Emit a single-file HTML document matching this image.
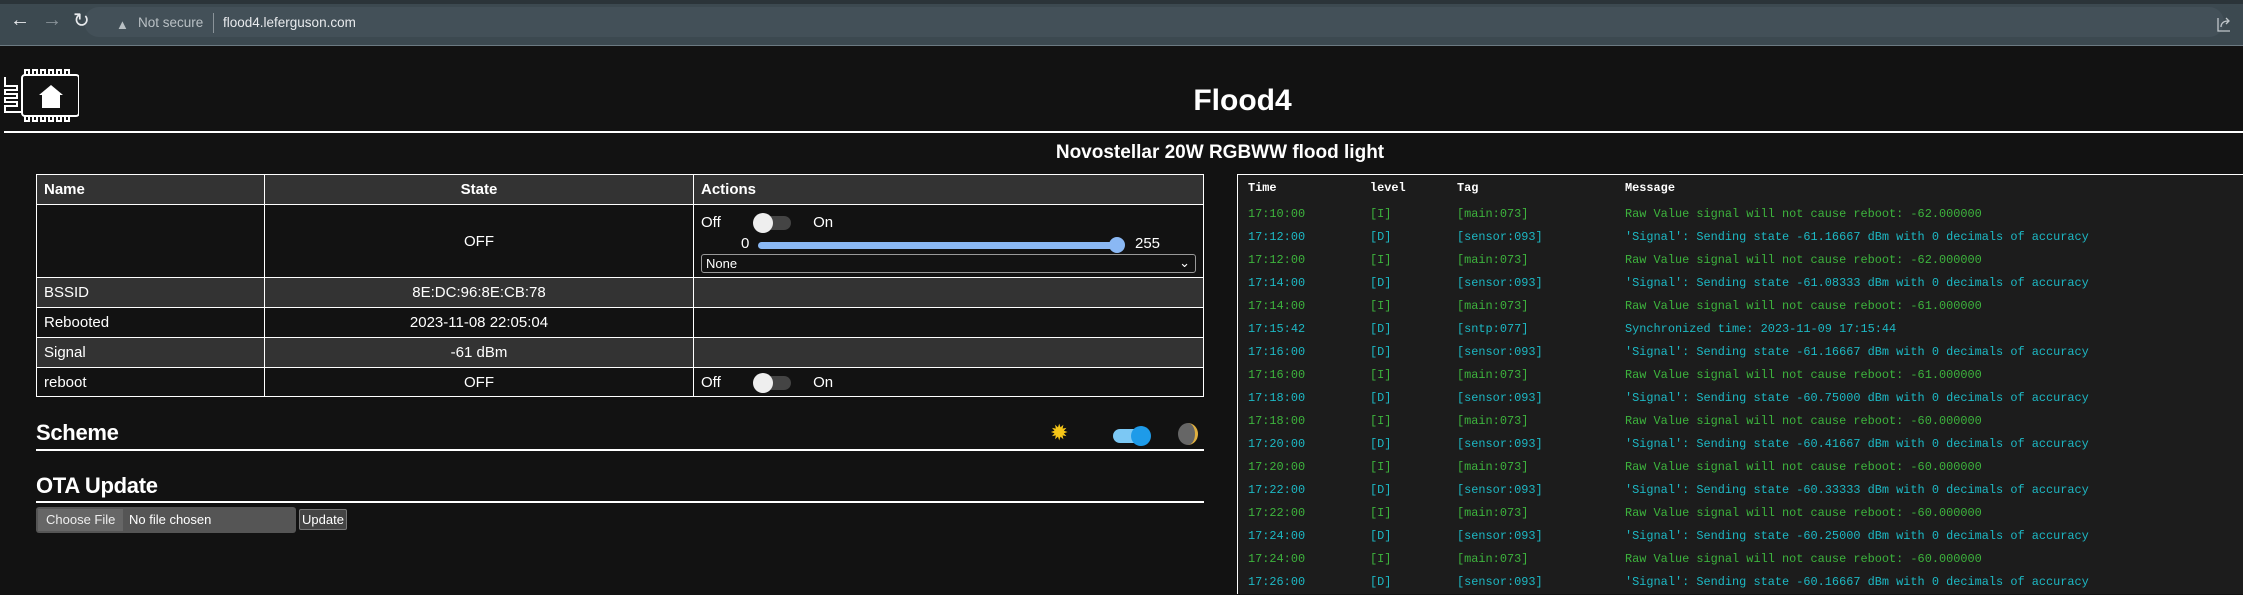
<!DOCTYPE html>
<html><head><meta charset="utf-8"><style>
*{box-sizing:border-box;margin:0;padding:0}
body{width:2243px;height:587px;overflow:hidden;background:#121212;font-family:"Liberation Sans",sans-serif;color:#fff;position:relative}
.abs{position:absolute}
.tb{left:0;top:0;width:2243px;height:46px;background:#3c4950;border-top:4px solid #2b3439;border-bottom:1px solid #6c7a82}
.url{left:84px;top:7px;width:2140px;height:30px;border-radius:15px;background:#435058}
table{border-collapse:collapse;position:absolute;left:36px;top:174px;width:1168px;font-size:15px}
td,th{border:1px solid #fff;padding:0 7px}
th{background:#333;text-align:left;height:30px}
th.c,td.c{text-align:center}
.g{background:#333}
.sw{display:inline-block;width:36px;height:14px;border-radius:7px;background:#444;position:relative;vertical-align:middle}
.sw:before{content:"";position:absolute;left:-2px;top:-3px;width:20px;height:20px;border-radius:50%;background:#eee}
.log{left:1237px;top:174px;width:1010px;height:420px;background:#1c1c1c;border-top:1px solid #fff;border-left:1px solid #fff;font-family:"Liberation Mono",monospace;font-size:11.9px}
.r{position:absolute;left:0;height:20px;white-space:pre}
.r span{position:absolute}
.G{color:#3db33d}.C{color:#1db8c4}
h2{position:absolute;font-size:22px;font-weight:bold;letter-spacing:-0.3px}
.ln{position:absolute;left:36px;width:1168px;height:2px;background:#fff}
</style></head><body>
<div class="abs tb"></div>
<div class="abs url"></div>
<div class="abs" style="left:10px;top:9px;font-size:20px;color:#e8eaed">&#8592;</div>
<div class="abs" style="left:42px;top:9px;font-size:20px;color:#8a9399">&#8594;</div>
<div class="abs" style="left:73px;top:8px;font-size:20px;color:#e8eaed">&#8635;</div>
<div class="abs" style="left:116px;top:17px;font-size:13px;color:#b9c0c4">&#9650;</div>
<div class="abs" style="left:138px;top:15px;font-size:13.5px;color:#b9c0c4">Not secure</div>
<div class="abs" style="left:213px;top:13px;width:1px;height:20px;background:#8a9399"></div>
<div class="abs" style="left:223px;top:15px;font-size:13.5px;color:#e8eaed">flood4.leferguson.com</div>
<svg class="abs" style="left:2217px;top:16px" width="16" height="16" viewBox="0 0 16 16"><g fill="none" stroke="#c0c6ca" stroke-width="1.3"><path d="M1 2v13h12"/><path d="M4 11c0-4 3-6 7-6M9 2l3 3-3 3"/></g></svg>
<svg class="abs" style="left:3px;top:66px" width="76" height="60" viewBox="0 0 76 60">
<g fill="none" stroke="#fff" stroke-width="2">
<rect x="19" y="9" width="57" height="41" rx="3"/>
<path d="M22 9v-5h4v5M30 9v-5h4v5M38 9v-5h4v5M46 9v-5h4v5M54 9v-5h4v5M62 9v-5h4v5M22 50v5h4v-5M30 50v5h4v-5M38 50v5h4v-5M46 50v5h4v-5M54 50v5h4v-5M62 50v5h4v-5"/>
<path d="M19 46H2v-6h12v-4H2v-4h12v-4H2v-4h12v-4H2V11"/>
</g>
<path fill="#fff" d="M36 29l12-10 12 10h-3v13H39V29z"/>
</svg>
<div class="abs" style="left:0;width:2243px;top:84px;text-align:center;font-size:30px;font-weight:bold;padding-left:242px">Flood4</div>
<div class="abs" style="left:4px;top:131px;width:2239px;height:2px;background:#fff"></div>
<div class="abs" style="left:0;width:2440px;top:142px;text-align:center;font-size:19px;font-weight:bold">Novostellar 20W RGBWW flood light</div>
<table>
<tr><th style="width:228px">Name</th><th class="c" style="width:429px">State</th><th>Actions</th></tr>
<tr style="height:73px"><td></td><td class="c">OFF</td><td style="padding-top:4px">
<div style="height:20px">Off <span class="sw" style="margin-left:30px"></span> <span style="margin-left:18px">On</span></div>
<div style="height:20px;position:relative"><span style="position:absolute;left:40px;top:1px">0</span><span style="position:absolute;left:57px;top:8px;width:360px;height:7px;border-radius:4px;background:#8ab8f4"></span><span style="position:absolute;left:408px;top:3px;width:16px;height:16px;border-radius:50%;background:#8ab8f4"></span><span style="position:absolute;left:434px;top:1px">255</span></div>
<div style="height:19px;border:1px solid #999;border-radius:3px;font-size:13px;padding:1px 4px;position:relative">None<span style="position:absolute;right:5px;top:0">&#8964;</span></div></td></tr>
<tr class="g" style="height:30px"><td>BSSID</td><td class="c">8E:DC:96:8E:CB:78</td><td></td></tr>
<tr style="height:30px"><td>Rebooted</td><td class="c">2023-11-08 22:05:04</td><td></td></tr>
<tr class="g" style="height:30px"><td>Signal</td><td class="c">-61 dBm</td><td></td></tr>
<tr style="height:29px"><td>reboot</td><td class="c">OFF</td><td>Off <span class="sw" style="margin-left:30px"></span> <span style="margin-left:18px">On</span></td></tr>
</table>
<h2 style="left:36px;top:420px">Scheme</h2>
<div class="ln" style="top:449px"></div>
<div class="abs" style="left:1050px;top:420px;font-size:22px;color:#f5c518">&#10041;</div>
<div class="abs" style="left:1113px;top:429px;width:34px;height:14px;border-radius:7px;background:#7cc8f4"></div>
<div class="abs" style="left:1131px;top:426px;width:20px;height:20px;border-radius:50%;background:#1e9be9"></div>
<div class="abs" style="left:1178px;top:423px;width:20px;height:22px;border-radius:50%;background:#666;border-right:3px solid #e0b040"></div>
<h2 style="left:36px;top:473px">OTA Update</h2>
<div class="ln" style="top:501px"></div>
<div class="abs" style="left:36px;top:507px;width:260px;height:26px;background:#555;border-radius:3px;font-size:13px;line-height:26px"><span style="display:inline-block;background:#666;padding:0 8px;height:22px;line-height:22px;margin:2px;color:#eee">Choose File</span> No file chosen</div>
<div class="abs" style="left:299px;top:509px;width:48px;height:21px;background:#444;border:1px solid #777;border-radius:2px;font-size:13px;line-height:19px;text-align:center">Update</div>
<div class="abs log">
<div class="r" style="top:6px;font-weight:bold;color:#fff"><span style="left:10px">Time</span><span style="left:132px">level</span><span style="left:219px">Tag</span><span style="left:387px">Message</span></div>
<div class="r G" style="top:32px"><span style="left:10px">17:10:00</span><span style="left:132px">[I]</span><span style="left:219px">[main:073]</span><span style="left:387px">Raw Value signal will not cause reboot: -62.000000</span></div>
<div class="r C" style="top:55px"><span style="left:10px">17:12:00</span><span style="left:132px">[D]</span><span style="left:219px">[sensor:093]</span><span style="left:387px">'Signal': Sending state -61.16667 dBm with 0 decimals of accuracy</span></div>
<div class="r G" style="top:78px"><span style="left:10px">17:12:00</span><span style="left:132px">[I]</span><span style="left:219px">[main:073]</span><span style="left:387px">Raw Value signal will not cause reboot: -62.000000</span></div>
<div class="r C" style="top:101px"><span style="left:10px">17:14:00</span><span style="left:132px">[D]</span><span style="left:219px">[sensor:093]</span><span style="left:387px">'Signal': Sending state -61.08333 dBm with 0 decimals of accuracy</span></div>
<div class="r G" style="top:124px"><span style="left:10px">17:14:00</span><span style="left:132px">[I]</span><span style="left:219px">[main:073]</span><span style="left:387px">Raw Value signal will not cause reboot: -61.000000</span></div>
<div class="r C" style="top:147px"><span style="left:10px">17:15:42</span><span style="left:132px">[D]</span><span style="left:219px">[sntp:077]</span><span style="left:387px">Synchronized time: 2023-11-09 17:15:44</span></div>
<div class="r C" style="top:170px"><span style="left:10px">17:16:00</span><span style="left:132px">[D]</span><span style="left:219px">[sensor:093]</span><span style="left:387px">'Signal': Sending state -61.16667 dBm with 0 decimals of accuracy</span></div>
<div class="r G" style="top:193px"><span style="left:10px">17:16:00</span><span style="left:132px">[I]</span><span style="left:219px">[main:073]</span><span style="left:387px">Raw Value signal will not cause reboot: -61.000000</span></div>
<div class="r C" style="top:216px"><span style="left:10px">17:18:00</span><span style="left:132px">[D]</span><span style="left:219px">[sensor:093]</span><span style="left:387px">'Signal': Sending state -60.75000 dBm with 0 decimals of accuracy</span></div>
<div class="r G" style="top:239px"><span style="left:10px">17:18:00</span><span style="left:132px">[I]</span><span style="left:219px">[main:073]</span><span style="left:387px">Raw Value signal will not cause reboot: -60.000000</span></div>
<div class="r C" style="top:262px"><span style="left:10px">17:20:00</span><span style="left:132px">[D]</span><span style="left:219px">[sensor:093]</span><span style="left:387px">'Signal': Sending state -60.41667 dBm with 0 decimals of accuracy</span></div>
<div class="r G" style="top:285px"><span style="left:10px">17:20:00</span><span style="left:132px">[I]</span><span style="left:219px">[main:073]</span><span style="left:387px">Raw Value signal will not cause reboot: -60.000000</span></div>
<div class="r C" style="top:308px"><span style="left:10px">17:22:00</span><span style="left:132px">[D]</span><span style="left:219px">[sensor:093]</span><span style="left:387px">'Signal': Sending state -60.33333 dBm with 0 decimals of accuracy</span></div>
<div class="r G" style="top:331px"><span style="left:10px">17:22:00</span><span style="left:132px">[I]</span><span style="left:219px">[main:073]</span><span style="left:387px">Raw Value signal will not cause reboot: -60.000000</span></div>
<div class="r C" style="top:354px"><span style="left:10px">17:24:00</span><span style="left:132px">[D]</span><span style="left:219px">[sensor:093]</span><span style="left:387px">'Signal': Sending state -60.25000 dBm with 0 decimals of accuracy</span></div>
<div class="r G" style="top:377px"><span style="left:10px">17:24:00</span><span style="left:132px">[I]</span><span style="left:219px">[main:073]</span><span style="left:387px">Raw Value signal will not cause reboot: -60.000000</span></div>
<div class="r C" style="top:400px"><span style="left:10px">17:26:00</span><span style="left:132px">[D]</span><span style="left:219px">[sensor:093]</span><span style="left:387px">'Signal': Sending state -60.16667 dBm with 0 decimals of accuracy</span></div>
</div>
</body></html>
